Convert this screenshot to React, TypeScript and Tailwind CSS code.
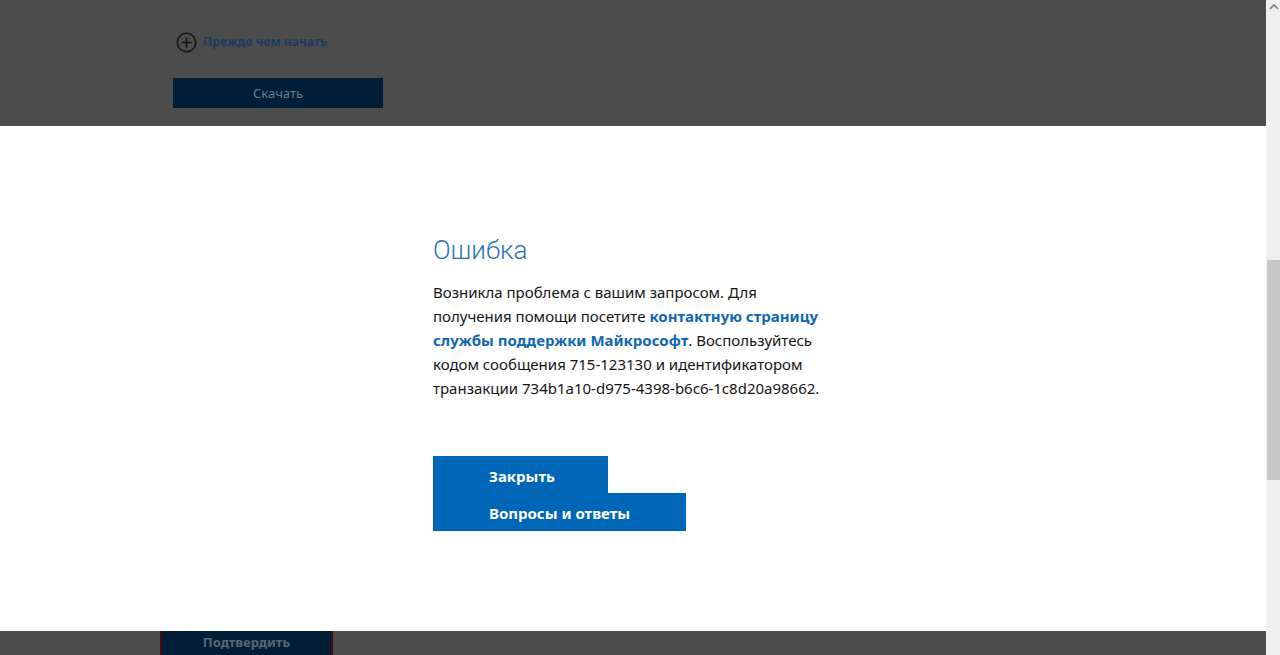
import React from "react";

export default function App() {
  const font = { fontFamily: '"Noto Sans", "Open Sans", Arial, sans-serif' };
  return (
    <div className="flex h-[655px] w-[1280px] overflow-hidden" style={font}>
      <div className="flex flex-1 flex-col">
        {/* dimmed top page */}
        <div className="flex h-[126px] flex-col bg-[#4c4c4c] pl-[173px]">
          <div className="mt-[32px] flex items-center gap-[6px] pl-[3px]">
            <svg width="21" height="21" viewBox="0 0 21 21" fill="none" stroke="#141414" strokeWidth="1.6">
              <circle cx="10.5" cy="10.5" r="9.2" />
              <path d="M10.5 5.5v10M5.5 10.5h10" />
            </svg>
            <span className="text-[12.2px] font-bold text-[#1c3b5e]">Прежде чем начать</span>
          </div>
          <div className="mt-[25px] flex h-[30px] w-[210px] items-center justify-center bg-[#001f37] pt-[2px] text-[13px] text-[#6d7e8c]">
            Скачать
          </div>
        </div>
        {/* white dialog area */}
        <div className="h-[505px] bg-white pl-[433px]">
          <div
            className="mt-[106px] text-[26px] font-light leading-[36px] text-[#2a72b8]"
            style={{ fontFamily: 'Roboto, "Noto Sans", sans-serif' }}
          >
            Ошибка
          </div>
          <p className="mt-[12px] w-[405px] text-[15px] leading-[24px] text-[#141414]">
            Возникла проблема с вашим запросом. Для получения помощи посетите{" "}
            <span className="font-bold text-[#0f67b5]">контактную страницу службы поддержки Майкрософт</span>.
            Воспользуйтесь кодом сообщения 715-123130 и идентификатором транзакции
            734b1a10-d975-4398-b6c6-1c8d20a98662.
          </p>
          <div className="mt-[56px] flex flex-col items-start">
            <div className="flex h-[37px] w-[175px] items-center bg-[#0067b8] pl-[56px] pt-[3px] text-[15px] font-bold text-white">
              Закрыть
            </div>
            <div className="flex h-[38px] w-[253px] items-center bg-[#0067b8] pl-[56px] pt-[2px] text-[15px] font-bold text-white">
              Вопросы и ответы
            </div>
          </div>
        </div>
        {/* dimmed bottom */}
        <div className="flex h-[24px] bg-[#4c4c4c] pl-[160px]">
          <div className="flex h-full w-[173px] items-center justify-center border-x-2 border-[#4a0c14] bg-[#001f37] text-[13px] font-bold text-[#5a6772]">
            Подтвердить
          </div>
        </div>
      </div>
      {/* scrollbar */}
      <div className="relative h-full w-[14px] border-l border-[#f6f6f6] bg-[#efefef]">
        <svg className="absolute left-[2px] top-[3px]" width="10" height="8" viewBox="0 0 10 8">
          <path d="M1 6 L5 2 L9 6" fill="none" stroke="#7a7a7a" strokeWidth="1.6" />
        </svg>
        <div className="absolute left-0 top-[260px] h-[220px] w-[13px] bg-[#c8c8c8]" />
      </div>
    </div>
  );
}
